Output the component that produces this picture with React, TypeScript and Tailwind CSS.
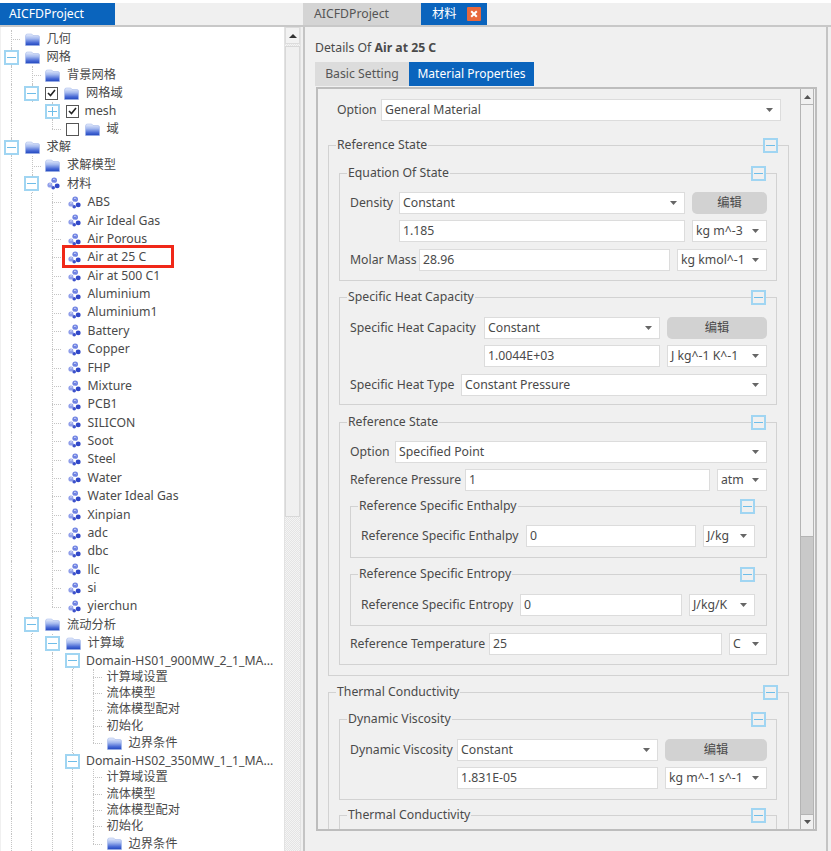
import React from "react";

const FONT = "[font-family:'Noto_Sans','Noto_Sans_CJK_SC',sans-serif]";

function Folder() {
  return (
    <svg width="15" height="13" viewBox="0 0 15 13" className="shrink-0">
      <defs>
        <linearGradient id="fg" x1="0" y1="0" x2="0" y2="1">
          <stop offset="0" stopColor="#e9effc" />
          <stop offset="0.4" stopColor="#a3b8ee" />
          <stop offset="0.75" stopColor="#4a6bd6" />
          <stop offset="1" stopColor="#1f45bd" />
        </linearGradient>
      </defs>
      <path d="M0.5 3 Q0.5 1 2.5 1 H6 Q7.5 1 8 2.5 H13 Q14.5 2.5 14.5 4 V12.5 H0.5 Z" fill="url(#fg)" stroke="#9db2e8" strokeWidth="0.5" />
    </svg>
  );
}

function Gem() {
  return (
    <svg width="13" height="13" viewBox="0 0 13 13" className="shrink-0">
      <ellipse cx="7.2" cy="3.2" rx="2.8" ry="2.6" fill="#6f82e2" />
      <ellipse cx="3" cy="8" rx="2.6" ry="2.6" fill="#8f9eea" />
      <ellipse cx="10.2" cy="8.9" rx="2.5" ry="2.4" fill="#3148c8" />
      <ellipse cx="6.2" cy="10.8" rx="1.8" ry="1.7" fill="#3d52cc" />
      <path d="M6 2.4 Q7.6 1.9 8.4 3" fill="none" stroke="#dde2fa" strokeWidth="0.9" />
      <path d="M2.2 7.2 Q3.2 6.4 4.2 7.2" fill="none" stroke="#e9ecfb" strokeWidth="0.9" />
      <circle cx="6.6" cy="6.9" r="1.2" fill="#ffffff" />
    </svg>
  );
}

function Expander({ plus = false, className = "bg-white" }: { plus?: boolean; className?: string }) {
  return (
    <span className={`relative z-10 flex h-[15px] w-[15px] shrink-0 items-center justify-center border-2 border-[#a0d5f2] ${className}`}>
      <span className="block h-px w-[9px] bg-[#6fbde8]" />
      {plus && <span className="absolute h-[9px] w-px bg-[#6fbde8]" />}
    </span>
  );
}

function Check({ on }: { on: boolean }) {
  return (
    <span className="flex h-[13px] w-[13px] shrink-0 items-center justify-center border border-[#555] bg-white">
      {on && (
        <svg width="9" height="8" viewBox="0 0 9 8">
          <path d="M1 4 L3.5 6.5 L8 1" fill="none" stroke="#222" strokeWidth="1.6" />
        </svg>
      )}
    </span>
  );
}

type Row = {
  d: number;
  g: number[];
  exp?: "-" | "+";
  lastStub?: boolean;
  check?: boolean;
  icon?: "f" | "g";
  t: string;
  h?: string;
};

function TreeRow({ r }: { r: Row }) {
  const cells = [];
  for (let i = 0; i < r.d; i++) {
    cells.push(
      <span key={i} className="flex h-full w-[20.5px] shrink-0 justify-center">
        {r.g.includes(i) && <span className="block h-full border-l border-dotted border-[#c4c4c4]" />}
      </span>
    );
  }
  return (
    <div className={`flex shrink-0 items-center ${r.h ?? "h-[18.38px]"}`}>
      {cells}
      <span className="relative flex h-full w-[20.5px] shrink-0 items-center justify-center">
        <span className={`absolute left-[10px] top-0 border-l border-dotted border-[#c4c4c4] ${r.lastStub ? "h-1/2" : "h-full"}`} />
        {r.exp ? (
          <Expander plus={r.exp === "+"} />
        ) : (
          <span className="absolute left-[10px] top-1/2 w-[9px] border-t border-dotted border-[#c4c4c4]" />
        )}
      </span>
      <span className="ml-[3px] flex items-center text-[12.25px] leading-none text-[#4a4a4a] whitespace-nowrap">
        {r.check !== undefined && (
          <span className="mr-[6px]">
            <Check on={r.check} />
          </span>
        )}
        {r.icon === "f" && (
          <span className="mr-[7px]">
            <Folder />
          </span>
        )}
        {r.icon === "g" && (
          <span className="ml-[2px] mr-[7px]">
            <Gem />
          </span>
        )}
        {r.t}
      </span>
    </div>
  );
}

const mats = [
  "ABS", "Air Ideal Gas", "Air Porous", "Air at 25 C", "Air at 500 C1", "Aluminium", "Aluminium1", "Battery",
  "Copper", "FHP", "Mixture", "PCB1", "SILICON", "Soot", "Steel", "Water", "Water Ideal Gas", "Xinpian",
  "adc", "dbc", "llc", "si",
];

const domainKids = (g: number[]): Row[] => [
  { d: 4, g, t: "计算域设置", h: "h-[16.3px]" },
  { d: 4, g, t: "流体模型", h: "h-[16.3px]" },
  { d: 4, g, t: "流体模型配对", h: "h-[16.3px]" },
  { d: 4, g, t: "初始化", h: "h-[16.3px]" },
  { d: 4, g, t: "边界条件", icon: "f", lastStub: true, h: "h-[19px]" },
];

const H18 = "h-[18px]";

const rows: Row[] = [
  { d: 0, g: [], t: "几何", icon: "f", h: H18 },
  { d: 0, g: [], exp: "-", t: "网格", icon: "f", h: H18 },
  { d: 1, g: [0], t: "背景网格", icon: "f", h: H18 },
  { d: 1, g: [0], exp: "-", check: true, t: "网格域", icon: "f", h: H18 },
  { d: 2, g: [0], exp: "+", check: true, t: "mesh", h: H18 },
  { d: 2, g: [0], check: false, t: "域", icon: "f", lastStub: true, h: H18 },
  { d: 0, g: [], exp: "-", t: "求解", icon: "f" },
  { d: 1, g: [0], t: "求解模型", icon: "f" },
  { d: 1, g: [0], exp: "-", t: "材料", icon: "g" },
  ...mats.map((t): Row => ({ d: 2, g: [0, 1], t, icon: "g" })),
  { d: 2, g: [0, 1], t: "yierchun", icon: "g", lastStub: true },
  { d: 1, g: [0], exp: "-", t: "流动分析", icon: "f" },
  { d: 2, g: [0, 1], exp: "-", t: "计算域", icon: "f" },
  { d: 3, g: [0, 1, 2], exp: "-", t: "Domain-HS01_900MW_2_1_MA...", h: "h-[16.3px]" },
  ...domainKids([0, 1, 2, 3]),
  { d: 3, g: [0, 1, 2], exp: "-", t: "Domain-HS02_350MW_1_1_MA...", h: "h-[16.3px]" },
  ...domainKids([0, 1, 2, 3]),
];

function Arrow() {
  return (
    <svg width="7" height="4" viewBox="0 0 7 4" className="shrink-0">
      <path d="M0 0 H7 L3.5 4 Z" fill="#666" />
    </svg>
  );
}

function Combo({ t, w }: { t: string; w?: string }) {
  return (
    <div className={`flex h-[22px] items-center justify-between border border-[#dcdcdc] bg-white pl-[3px] pr-[7px] text-[12.25px] text-[#4a4a4a] ${w ?? "min-w-0 flex-1"}`}>
      <span className="whitespace-nowrap">{t}</span>
      <Arrow />
    </div>
  );
}

function Input({ t }: { t: string }) {
  return (
    <div className="flex h-[22px] min-w-0 flex-1 items-center border border-[#dcdcdc] bg-white pl-[3px] text-[12.25px] text-[#4a4a4a]">
      {t}
    </div>
  );
}

function Edit({ w }: { w: string }) {
  return (
    <div className={`flex h-[22px] items-center justify-center rounded-[5px] bg-[#d2d2d2] text-[12.25px] text-[#4a4a4a] ${w}`}>编辑</div>
  );
}

function Label({ t, w }: { t?: string; w: string }) {
  return <div className={`shrink-0 whitespace-nowrap text-[12.25px] text-[#4a4a4a] ${w}`}>{t}</div>;
}

function F({ children, className = "" }: { children: React.ReactNode; className?: string }) {
  return <div className={`flex items-center gap-[7px] ${className}`}>{children}</div>;
}

function Group({
  title,
  className = "",
  btn,
  children,
}: {
  title: string;
  className?: string;
  btn: string;
  children: React.ReactNode;
}) {
  return (
    <div className={`relative border border-[#d2d2d2] ${className}`}>
      <div className="absolute left-[7px] top-[-10px] bg-[#f0f0f0] px-px text-[12.25px] leading-[18px] text-[#4a4a4a] whitespace-nowrap">
        {title}
      </div>
      <div className={`absolute top-[-8px] ${btn}`}>
        <Expander className="bg-[#f0f0f0]" />
      </div>
      {children}
    </div>
  );
}

export default function App() {
  return (
    <div className={`relative flex h-[851px] w-[831px] flex-col overflow-hidden bg-white ${FONT}`}>
      <div className="h-[3px] shrink-0 bg-white" />
      <div className="flex min-h-0 flex-1">
        {/* left panel */}
        <div className="flex w-[303px] shrink-0 flex-col bg-[#f0f0f0]">
          <div className="flex h-[24px] shrink-0 border-b-2 border-[#c8c8c8]">
            <div className="flex w-[115px] items-center bg-[#0a64bd] pl-[9px] text-[12.25px] text-white">AICFDProject</div>
          </div>
          <div className="flex min-h-0 flex-1">
            <div className="ml-px flex w-[283px] flex-col overflow-hidden bg-white pt-[3px]">
              {rows.map((r, i) => (
                <TreeRow key={i} r={r} />
              ))}
            </div>
            <div className="flex w-[17px] shrink-0 flex-col border-x border-[#e2e2e2] bg-[repeating-conic-gradient(#e4e4e4_0_25%,#f4f4f4_0_50%)] bg-[length:2px_2px]">
              <div className="flex h-[17px] items-center justify-center border border-[#dcdcdc] bg-[#f2f2f2]">
                <svg width="8" height="4" viewBox="0 0 8 4">
                  <path d="M4 0 L8 4 H0 Z" fill="#333" />
                </svg>
              </div>
              <div className="mt-[2px] h-[471px] border border-[#d8d8d8] bg-[#f0f0f0]" />
            </div>
          </div>
        </div>
        {/* right panel */}
        <div className="flex min-w-0 flex-1 flex-col bg-[#f0f0f0]">
          <div className="flex h-[24px] shrink-0 border-b-2 border-[#c8c8c8]">
            <div className="flex w-[118px] items-center bg-[#d4d4d4] pl-[11px] text-[12.25px] text-[#555]">AICFDProject</div>
            <div className="flex w-[66px] items-center bg-[#0a64bd] pl-[11px] text-[12.25px] text-white">
              材料
              <span className="ml-[10px] flex h-[14px] w-[14px] items-center justify-center rounded-[1px] bg-[#e8683c]">
                <svg width="8" height="8" viewBox="0 0 8 8">
                  <path d="M1.2 1.2 L6.8 6.8 M6.8 1.2 L1.2 6.8" stroke="#fff" strokeWidth="2" />
                </svg>
              </span>
            </div>
          </div>
          <div className="mr-[3px] flex min-h-0 flex-1 flex-col border-x-2 border-[#c4c4c4] pl-[10px] pr-[9px]">
            <div className="mt-[12px] flex h-[18px] shrink-0 items-center text-[12.25px] text-[#4a4a4a]">
              Details Of&nbsp;<b className="font-bold">Air at 25 C</b>
            </div>
            <div className="mt-[5px] flex h-[24px] shrink-0">
              <div className="flex w-[94px] items-center justify-center bg-[#dcdcdc] text-[12.25px] text-[#555]">Basic Setting</div>
              <div className="flex w-[125px] items-center justify-center bg-[#0a64bd] text-[12px] text-white">Material Properties</div>
            </div>
            <div className="ml-[1px] mt-[1px] flex h-[744px] shrink-0 overflow-hidden border-2 border-[#bdbdbd]">
              <div className="min-w-0 flex-1 overflow-hidden pl-[10px] pr-[11px] pt-[10px]">
                <F className="ml-[9px] mr-[8px]">
                  <Label t="Option" w="w-[37px]" />
                  <Combo t="General Material" />
                </F>
                <Group title="Reference State" btn="right-[10px]" className="mt-[24px] h-[531px] pl-[10px] pr-[11px] pt-[27px]">
                  <Group title="Equation Of State" btn="right-[10px]" className="h-[108px] pl-[10px] pr-[9px] pt-[18px]">
                    <F>
                      <Label t="Density" w="w-[42px]" />
                      <Combo t="Constant" />
                      <Edit w="w-[75px]" />
                    </F>
                    <F className="mt-[6px] pl-[49px]">
                      <Input t="1.185" />
                      <Combo t="kg m^-3" w="w-[75px]" />
                    </F>
                    <F className="mt-[7px]">
                      <Label t="Molar Mass" w="w-[62px]" />
                      <Input t="28.96" />
                      <Combo t="kg kmol^-1" w="w-[90px]" />
                    </F>
                  </Group>
                  <Group title="Specific Heat Capacity" btn="right-[10px]" className="mt-[16px] h-[108px] pl-[10px] pr-[9px] pt-[19px]">
                    <F>
                      <Label t="Specific Heat Capacity" w="w-[127px]" />
                      <Combo t="Constant" />
                      <Edit w="w-[100px]" />
                    </F>
                    <F className="mt-[6px] pl-[134px]">
                      <Input t="1.0044E+03" />
                      <Combo t="J kg^-1 K^-1" w="w-[100px]" />
                    </F>
                    <F className="mt-[7px]">
                      <Label t="Specific Heat Type" w="w-[104px]" />
                      <Combo t="Constant Pressure" />
                    </F>
                  </Group>
                  <Group title="Reference State" btn="right-[10px]" className="mt-[17px] h-[243px] pl-[10px] pr-[9px] pt-[18px]">
                    <F>
                      <Label t="Option" w="w-[38px]" />
                      <Combo t="Specified Point" />
                    </F>
                    <F className="mt-[6px]">
                      <Label t="Reference Pressure" w="w-[108px]" />
                      <Input t="1" />
                      <Combo t="atm" w="w-[50px]" />
                    </F>
                    <Group title="Reference Specific Enthalpy" btn="right-[11px]" className="mt-[15px] h-[52px] pl-[10px] pr-[11px] pt-[18px]">
                      <F>
                        <Label t="Reference Specific Enthalpy" w="w-[158px]" />
                        <Input t="0" />
                        <Combo t="J/kg" w="w-[52px]" />
                      </F>
                    </Group>
                    <Group title="Reference Specific Entropy" btn="right-[11px]" className="mt-[16px] h-[52px] pl-[10px] pr-[11px] pt-[19px]">
                      <F>
                        <Label t="Reference Specific Entropy" w="w-[152px]" />
                        <Input t="0" />
                        <Combo t="J/kg/K" w="w-[66px]" />
                      </F>
                    </Group>
                    <F className="mt-[7px]">
                      <Label t="Reference Temperature" w="w-[132px]" />
                      <Input t="25" />
                      <Combo t="C" w="w-[38px]" />
                    </F>
                  </Group>
                </Group>
                <Group title="Thermal Conductivity" btn="right-[10px]" className="mt-[16px] h-[200px] pl-[10px] pr-[11px] pt-[26px]">
                  <Group title="Dynamic Viscosity" btn="right-[10px]" className="h-[81px] pl-[10px] pr-[9px] pt-[19px]">
                    <F>
                      <Label t="Dynamic Viscosity" w="w-[100px]" />
                      <Combo t="Constant" />
                      <Edit w="w-[102px]" />
                    </F>
                    <F className="mt-[6px] pl-[107px]">
                      <Input t="1.831E-05" />
                      <Combo t="kg m^-1 s^-1" w="w-[102px]" />
                    </F>
                  </Group>
                  <Group title="Thermal Conductivity" btn="right-[10px]" className="mt-[15px] h-[60px]">
                    <span />
                  </Group>
                </Group>
              </div>
              <div className="mr-[1px] flex w-[14px] shrink-0 flex-col justify-between border-x border-[#b4b4b4] bg-[#c9c9c9]">
                <div>
                  <div className="flex h-[16px] items-center justify-center border-b border-[#b4b4b4] bg-[#f0f0f0]">
                    <svg width="7" height="4" viewBox="0 0 7 4"><path d="M3.5 0 L7 4 H0 Z" fill="#555" /></svg>
                  </div>
                  <div className="h-[432px] border-b border-[#b4b4b4] bg-[#f0f0f0]" />
                </div>
                <div className="flex h-[15px] items-center justify-center border-t border-[#b4b4b4] bg-[#f0f0f0]">
                  <svg width="7" height="4" viewBox="0 0 7 4"><path d="M0 0 H7 L3.5 4 Z" fill="#555" /></svg>
                </div>
              </div>
            </div>
          </div>
        </div>
      </div>
      {/* annotation */}
      <div className="absolute left-[62px] top-[245px] h-[23px] w-[112px] border-[3px] border-[#f02818]" />
    </div>
  );
}
